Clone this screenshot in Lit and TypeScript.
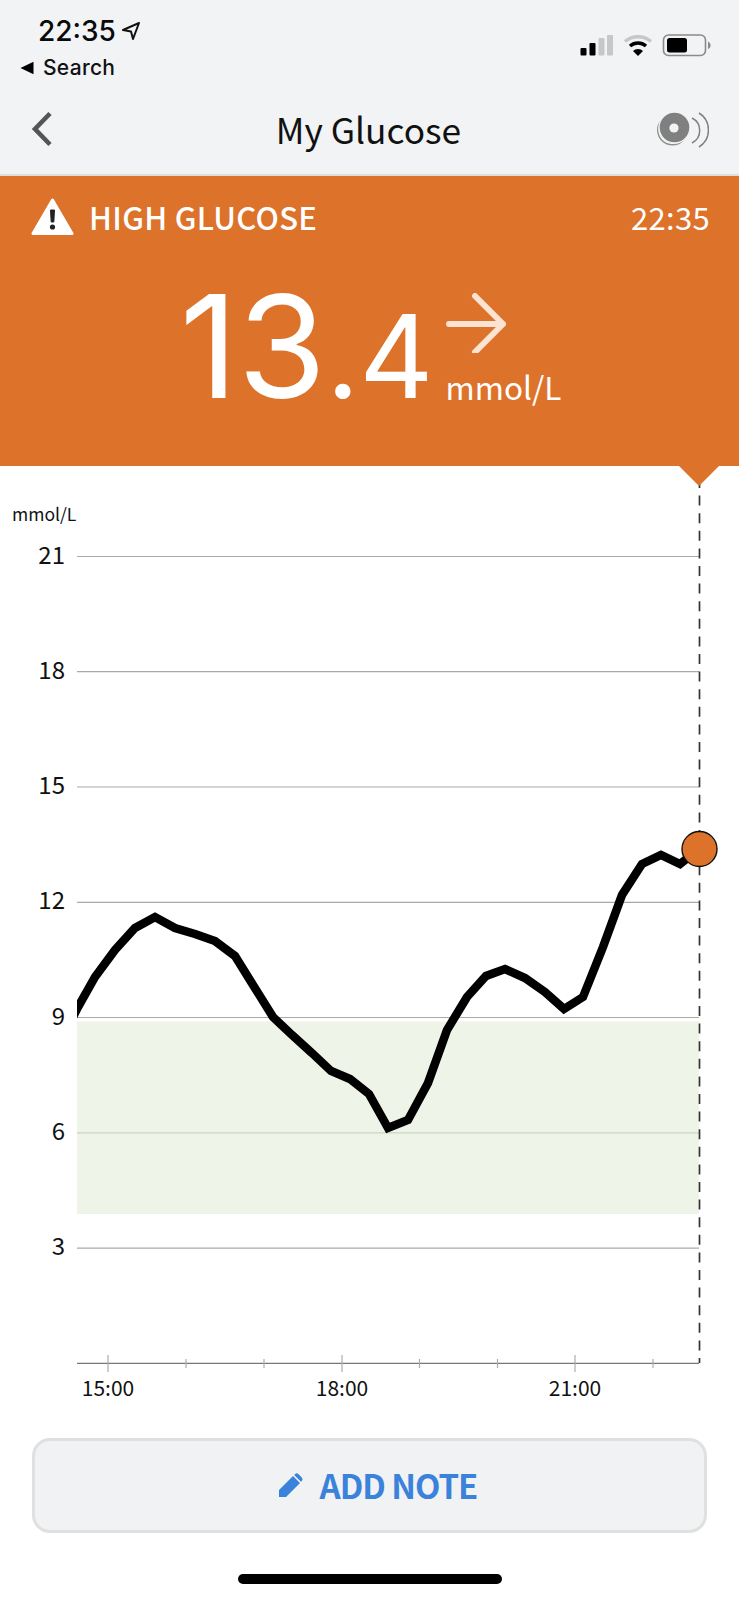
import { LitElement, html, css, svg } from "lit";
import { customElement } from "lit/decorators.js";

const SANS = css`"Noto Sans CJK JP", "Noto Sans", sans-serif`;

const CURVE: [number, number][] = [
  [66, 1031], [77, 1009], [95, 977], [115, 950], [135, 928], [155, 917], [175, 928], [195, 934], [215, 941],
  [235, 956], [253, 985], [273, 1017], [292, 1035], [312, 1053], [331, 1071], [350, 1079], [369, 1094],
  [388, 1128], [408, 1120], [428, 1083], [447, 1030], [467, 997], [486, 976], [505, 969], [525, 978],
  [545, 992], [564, 1009], [583, 997], [603, 947], [622, 895], [642, 864], [661, 855], [680, 864], [699, 849],
];

const GRID = [
  { v: "21", y: 556.5 }, { v: "18", y: 671.7 }, { v: "15", y: 787 }, { v: "12", y: 902.3 },
  { v: "9", y: 1017.5 }, { v: "6", y: 1132.8 }, { v: "3", y: 1248.2 },
];

const TICKS = [
  { x: 108, label: "15:00" }, { x: 186 }, { x: 264 }, { x: 342, label: "18:00" },
  { x: 419.5 }, { x: 497.5 }, { x: 575, label: "21:00" }, { x: 653 },
] as { x: number; label?: string }[];

@customElement("app-root")
export class AppRoot extends LitElement {
  static styles = css`
    :host { display: block; width: 739px; height: 1600px; background: #fff; font-family: ${SANS}; overflow: hidden; }
    .top { background: #f2f3f5; height: 174px; border-bottom: 2px solid #dedfdb; display: flex; flex-direction: column; }
    .status { height: 93px; display: flex; justify-content: space-between; align-items: flex-start; }
    .status-left { display: flex; flex-direction: column; padding: 15px 0 0 20px; }
    .clock { display: flex; align-items: center; gap: 5px; padding-left: 18px; font: 500 28px/32px Inter, sans-serif; color: #0a0a0a; }
    .search { display: flex; align-items: center; gap: 9px; margin-top: 8px; font: 500 21px/26px Inter, sans-serif; color: #111; letter-spacing: .3px; }
    .status-right { display: block; margin: 30px 27px 0 0; }
    .nav { flex: 1; display: flex; align-items: center; justify-content: space-between; padding: 0 30px 10px 28px; position: relative; }
    .title { position: absolute; left: 0; right: 0; text-align: center; font-size: 35.3px; line-height: 44px; color: #111; font-weight: 400; padding-right: 2px; }
    .banner { background: #dd722b; height: 290px; color: #fff; display: flex; flex-direction: column; padding: 0 29px 0 31px; box-sizing: border-box; }
    .alert { display: flex; align-items: center; justify-content: space-between; padding-top: 21px; }
    .alert-left { display: flex; align-items: center; gap: 15px; }
    .alert-title { font-size: 31px; line-height: 40px; font-weight: 500; letter-spacing: .3px; }
    .alert-time { font-size: 31px; line-height: 40px; font-weight: 400; letter-spacing: .3px; }
    .reading { display: flex; align-items: flex-start; justify-content: center; margin-top: 29px; }
    .value { display: flex; align-items: baseline; font-family: Inter, sans-serif; font-weight: 400; color: #fff; line-height: 160px; height: 160px; }
    .value .big { font-size: 143px; }
    .value .small { font-size: 115px; }
    .unit-col { display: flex; flex-direction: column; margin-left: 12px; padding-top: 27px; }
    .unit { font-size: 31.5px; line-height: 38px; margin-top: 14px; color: #fff; }
    .chart { display: block; }
    .axis-text { font-family: ${SANS}; fill: #111; }
    .y-label { font-size: 24px; }
    .x-label { font-size: 21px; }
    .unit-label { font-size: 17.5px; }
    .action { padding: 0 32px; }
    .button { height: 95px; box-sizing: border-box; border: 3px solid #e0e0e0; border-radius: 18px; background: #f1f2f4; display: flex; align-items: center; justify-content: center; gap: 16px; color: #3b82db; font-size: 33px; font-weight: 600; letter-spacing: -1px; padding: 0 0 2px 16px; }
    .home { display: flex; justify-content: center; padding-top: 41px; }
    .home i { display: block; width: 264px; height: 10px; border-radius: 5px; background: #000; }
  `;

  private statusIcons() {
    return html`<svg class="status-right" width="132" height="30" viewBox="580 30 132 30">
      <rect x="580.5" y="48" width="6" height="7.5" rx="1" fill="#000" />
      <rect x="589.5" y="43" width="6" height="12.5" rx="1" fill="#000" />
      <rect x="598.5" y="38" width="6" height="17.5" rx="1" fill="#c6c7c9" />
      <rect x="607" y="35" width="6" height="20.5" rx="1" fill="#c6c7c9" />
      <path d="M625 41.5 A20 20 0 0 1 651 41.5" fill="none" stroke="#c6c7c9" stroke-width="3.6" />
      <path d="M630 46 A12 12 0 0 1 646 46" fill="none" stroke="#000" stroke-width="3.4" />
      <path d="M633 51 A7 7 0 0 1 643 51 L638 56 Z" fill="#000" />
      <rect x="663.5" y="35" width="42" height="20.5" rx="5" fill="none" stroke="#8a8a8a" stroke-width="1.6" />
      <rect x="667" y="38" width="20" height="14.5" rx="2.5" fill="#000" />
      <path d="M708 41.5 A4 4 0 0 1 708 49 Z" fill="#8a8a8a" />
    </svg>`;
  }

  private chart() {
    const pts = CURVE.map((p) => p.join(",")).join(" ");
    return html`<svg class="chart" width="739" height="972" viewBox="0 466 739 972">
      <defs><clipPath id="plot"><rect x="77" y="466" width="662" height="972" /></clipPath></defs>
      <rect x="77" y="1021.5" width="622" height="192.5" fill="#eef4e7" />
      ${GRID.map((g) => svg`
        <line x1="77" x2="699" y1=${g.y} y2=${g.y} stroke=${g.v === "6" ? "#ccd3c4" : "#a9a9a9"} stroke-width="1.2" />
        <text class="axis-text y-label" x="65" y=${g.y + 7} text-anchor="end">${g.v}</text>`)}
      <text class="axis-text unit-label" x="12" y="521">mmol/L</text>
      <line x1="77" x2="699" y1="1363.3" y2="1363.3" stroke="#777" stroke-width="1.2" />
      ${TICKS.map((t) => svg`
        <line x1=${t.x} x2=${t.x} y1=${t.label ? 1355 : 1359} y2=${t.label ? 1372 : 1368} stroke="#adadad" stroke-width="1.2" />
        ${t.label ? svg`<text class="axis-text x-label" x=${t.x} y="1396" text-anchor="middle">${t.label}</text>` : ""}`)}
      <line x1="699.5" x2="699.5" y1="478" y2="1363" stroke="#333" stroke-width="1.7" stroke-dasharray="10 7.6" />
      <path d="M679 466 H719 L699 486 Z" fill="#dd722b" />
      <polyline clip-path="url(#plot)" points=${pts} fill="none" stroke="#000" stroke-width="8.5" stroke-linejoin="miter" stroke-linecap="butt" />
      <circle cx="699.5" cy="849" r="17.5" fill="#dd722b" stroke="#111" stroke-width="1.4" />
    </svg>`;
  }

  render() {
    return html`
      <div class="top">
        <div class="status">
          <div class="status-left">
            <div class="clock">22:35
              <svg width="20" height="20" viewBox="0 0 20 20"><path d="M18 2 L2 9 L10 10.5 L12 18 Z" fill="none" stroke="#111" stroke-width="2" stroke-linejoin="round" /></svg>
            </div>
            <div class="search">
              <svg width="14" height="14" viewBox="0 0 14 14"><path d="M0.5 7 L13.5 0.8 V13.2 Z" fill="#000" /></svg>
              Search
            </div>
          </div>
          ${this.statusIcons()}
        </div>
        <div class="nav">
          <svg width="28" height="38" viewBox="0 0 28 38"><path d="M22 3.5 L7 19 L22 34.5" fill="none" stroke="#555" stroke-width="4.6" /></svg>
          <div class="title">My Glucose</div>
          <svg width="54" height="40" viewBox="655 108 54 40">
            <circle cx="672.5" cy="129" r="14.8" fill="none" stroke="#8f8f8f" stroke-width="1.4" />
            <circle cx="674.5" cy="126.5" r="15.5" fill="#808080" stroke="#f2f3f5" stroke-width="1.4" />
            <circle cx="674" cy="127" r="4.6" fill="#f2f3f5" />
            <path d="M692 117 A14 14 0 0 1 692 142" fill="none" stroke="#808080" stroke-width="1.5" />
            <path d="M699 112 A20 20 0 0 1 699 146" fill="none" stroke="#808080" stroke-width="1.5" />
          </svg>
        </div>
      </div>
      <div class="banner">
        <div class="alert">
          <div class="alert-left">
            <svg width="43" height="38" viewBox="0 0 43 38">
              <path d="M21.5 2 L41 35.5 H2 Z" fill="#fff" stroke="#fff" stroke-width="3" stroke-linejoin="round" />
              <path d="M19.5 12 H23.5 L22.8 24 H20.2 Z" fill="#222" stroke="#222" stroke-width="1" stroke-linejoin="round" />
              <circle cx="21.5" cy="29" r="2.6" fill="#222" />
            </svg>
            <span class="alert-title">HIGH GLUCOSE</span>
          </div>
          <span class="alert-time">22:35</span>
        </div>
        <div class="reading">
          <div class="value"><span class="big">13</span><span class="small">.4</span></div>
          <div class="unit-col">
            <svg width="60" height="60" viewBox="0 0 60 60"><path d="M3 31 H57 M29 3 L57 31 L29 59" fill="none" stroke="#fbe3d3" stroke-width="6" stroke-linecap="round" stroke-linejoin="round" /></svg>
            <div class="unit">mmol/L</div>
          </div>
        </div>
      </div>
      ${this.chart()}
      <div class="action">
        <div class="button">
          <svg width="26" height="26" viewBox="0 0 26 26"><path d="M1 25 V18 L15 4 L22 11 L8 25 Z M17 2.2 A2.6 2.6 0 0 1 20.6 2.2 L23.8 5.4 A2.6 2.6 0 0 1 23.8 9 L23 9.8 L16.2 3 Z" fill="#3b82db" /></svg>
          <span>ADD NOTE</span>
        </div>
      </div>
      <div class="home"><i></i></div>
    `;
  }
}
